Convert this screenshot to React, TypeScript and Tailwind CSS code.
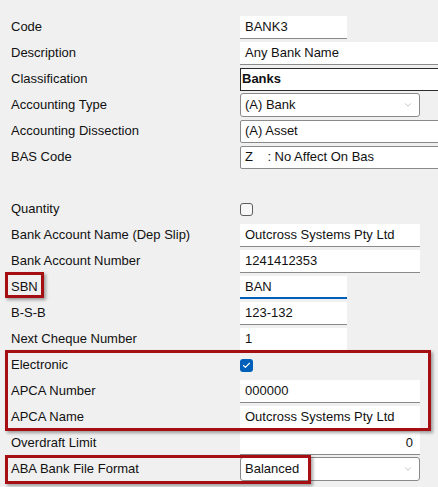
import { Check, ChevronDown } from "lucide-react";

type Kind = "plain" | "boxed" | "select" | "bold" | "focus" | "check" | "blank";

type Row = {
  label?: string;
  kind: Kind;
  value?: string;
  width?: "short" | "mid" | "long";
  checked?: boolean;
  right?: boolean;
};

const rows: Row[] = [
  { label: "Code", kind: "plain", value: "BANK3", width: "short" },
  { label: "Description", kind: "plain", value: "Any Bank Name", width: "long" },
  { label: "Classification", kind: "bold", value: "Banks", width: "long" },
  { label: "Accounting Type", kind: "select", value: "(A) Bank", width: "mid" },
  { label: "Accounting Dissection", kind: "boxed", value: "(A) Asset", width: "long" },
  { label: "BAS Code", kind: "boxed", value: "Z    : No Affect On Bas", width: "long" },
  { kind: "blank" },
  { label: "Quantity", kind: "check", checked: false },
  { label: "Bank Account Name (Dep Slip)", kind: "plain", value: "Outcross Systems Pty Ltd", width: "mid" },
  { label: "Bank Account Number", kind: "plain", value: "1241412353", width: "mid" },
  { label: "SBN", kind: "focus", value: "BAN", width: "short" },
  { label: "B-S-B", kind: "plain", value: "123-132", width: "short" },
  { label: "Next Cheque Number", kind: "plain", value: "1", width: "short" },
  { label: "Electronic", kind: "check", checked: true },
  { label: "APCA Number", kind: "plain", value: "000000", width: "mid" },
  { label: "APCA Name", kind: "plain", value: "Outcross Systems Pty Ltd", width: "mid" },
  { label: "Overdraft Limit", kind: "plain", value: "0", width: "mid", right: true },
  { label: "ABA Bank File Format", kind: "select", value: "Balanced", width: "mid" },
];

// "long" fields run past the window's right edge in the original form
const widths = {
  short: "w-[107px]",
  mid: "w-[180px]",
  long: "w-[220px]",
};

function Field({ row }: { row: Row }) {
  const w = widths[row.width ?? "mid"];
  const text = <span className="whitespace-pre">{row.value}</span>;

  switch (row.kind) {
    case "check":
      return row.checked ? (
        <span className="flex size-[13px] items-center justify-center rounded-[3px] bg-[#005fb8]">
          <Check className="size-[9px] text-white" strokeWidth={3} />
        </span>
      ) : (
        <span className="size-[13px] rounded-[3px] border border-[#5d5d5d] bg-[#f7f7f7]" />
      );
    case "select":
      return (
        <div
          className={`${w} flex h-[24px] shrink-0 items-center justify-between rounded-[3px] border border-[#8a8a8a] bg-white pr-[6px] pl-[4px]`}
        >
          {text}
          <ChevronDown className="size-[10px] text-[#8a8a8a]" strokeWidth={1.25} />
        </div>
      );
    case "boxed":
      return (
        <div className={`${w} flex h-[23px] shrink-0 items-center rounded-[2px] border border-[#8a8a8a] bg-white pl-[4px]`}>
          {text}
        </div>
      );
    case "bold":
      return (
        <div className={`${w} flex h-[23px] shrink-0 items-center border border-[#2b2b2b] bg-white pl-[1px] font-bold`}>
          {text}
        </div>
      );
    case "focus":
      return (
        <div className={`${w} flex h-[23px] shrink-0 items-center border-b-2 border-[#005fb8] bg-white pt-[1px] pl-[5px]`}>
          {text}
        </div>
      );
    case "plain":
      return (
        <div
          className={`${w} flex h-[23px] shrink-0 items-center border-b border-[#8a8a8a] bg-white px-[5px] ${
            row.right ? "justify-end pr-[7px]" : ""
          }`}
        >
          {text}
        </div>
      );
    default:
      return null;
  }
}

export default function App() {
  return (
    <div className="relative h-[487px] w-[438px] overflow-hidden bg-[#f0f0f0] font-['Liberation_Sans',Arial,sans-serif] text-[13px] text-[#111]">
      <div className="flex flex-col pt-[14px]">
        {rows.map((row, i) => (
          <div key={i} className="flex h-[26px] items-center">
            <div className="w-[240px] shrink-0 pl-[11px]">{row.label}</div>
            <Field row={row} />
          </div>
        ))}
      </div>

      {/* highlight annotations drawn over the form */}
      <div className="absolute top-[272px] left-[5px] h-[26px] w-[39px] border-[3px] border-[#a50f14] shadow-[2px_2px_3px_rgba(0,0,0,0.35)]" />
      <div className="absolute top-[350px] left-[5px] h-[81px] w-[426px] border-[3px] border-[#a50f14] shadow-[2px_2px_3px_rgba(0,0,0,0.35)]" />
      <div className="absolute top-[455px] left-[5px] h-[29px] w-[306px] border-[3px] border-[#a50f14] shadow-[2px_2px_3px_rgba(0,0,0,0.35)]" />
    </div>
  );
}
